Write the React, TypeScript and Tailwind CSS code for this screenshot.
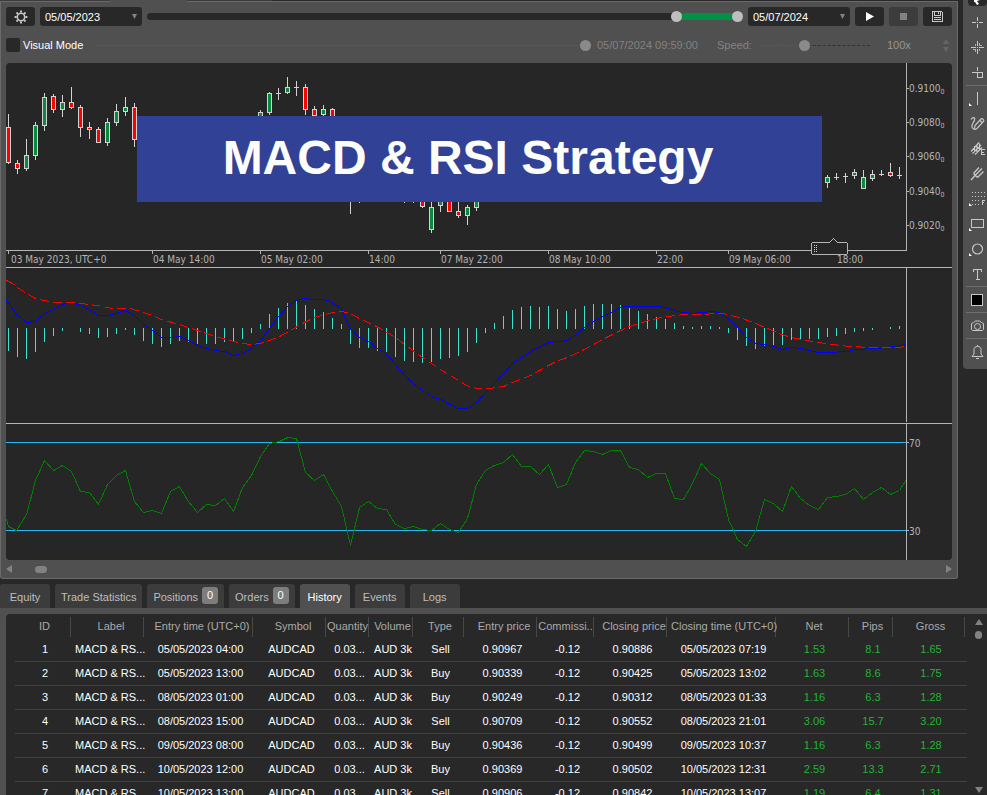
import React, { useState } from "react";

type Candle = [number, number, number, number, number, string];

// slot, high, body top, body bottom, low, kind (g = up, r = down, d = doji)
const candles: Candle[] = [
  [0, 114, 127, 163, 164, "r"],
  [1, 160, 163, 169, 174, "r"],
  [2, 139, 155, 169, 171, "g"],
  [3, 122, 125, 156, 160, "g"],
  [4, 93, 97, 126, 131, "g"],
  [5, 94, 96, 110, 113, "r"],
  [6, 95, 102, 110, 117, "g"],
  [7, 87, 102, 108, 109, "r"],
  [8, 105, 107, 128, 137, "r"],
  [9, 122, 127, 130, 139, "r"],
  [10, 127, 129, 143, 143, "r"],
  [11, 118, 122, 143, 146, "g"],
  [12, 104, 111, 123, 126, "g"],
  [13, 97, 107, 112, 116, "g"],
  [14, 103, 107, 140, 147, "r"],
  [28, 110, 112, 124, 126, "g"],
  [29, 92, 93, 113, 115, "g"],
  [30, 88, 93, 94, 100, "d"],
  [31, 77, 87, 93, 94, "g"],
  [32, 81, 87, 88, 96, "d"],
  [33, 84, 87, 110, 115, "r"],
  [34, 106, 109, 116, 118, "r"],
  [35, 105, 109, 115, 116, "g"],
  [36, 108, 109, 124, 126, "r"],
  [38, 180, 186, 192, 214, "g"],
  [39, 180, 186, 192, 203, "g"],
  [44, 180, 186, 192, 203, "r"],
  [45, 180, 186, 192, 203, "g"],
  [46, 190, 195, 207, 208, "r"],
  [47, 190, 207, 230, 233, "g"],
  [48, 190, 195, 206, 212, "g"],
  [49, 190, 195, 212, 212, "r"],
  [50, 190, 211, 216, 218, "r"],
  [51, 205, 207, 216, 225, "g"],
  [52, 190, 195, 208, 211, "g"],
  [91, 175, 177, 183, 188, "g"],
  [92, 173, 177, 178, 180, "d"],
  [93, 173, 176, 177, 183, "d"],
  [94, 169, 172, 176, 179, "g"],
  [95, 170, 177, 189, 189, "g"],
  [96, 170, 174, 179, 181, "g"],
  [97, 170, 174, 175, 176, "d"],
  [98, 163, 172, 176, 177, "r"],
  [99, 167, 175, 176, 179, "d"],
];

const histogram = [
  -23, -29, -31, -24, -14, -8, -3, 0, -4, -6, -10, -9, -6, -2, -7, -13, -16, -19, -16, -13,
  -14, -16, -16, -16, -14, -14, -11, -5, 5, 15, 21, 26, 28, 24, 20, 17, 11, 5, -16, -20,
  -20, -23, -24, -29, -33, -34, -35, -34, -31, -30, -28, -24, -15, -5, 6, 13, 19, 22, 23, 22,
  23, 20, 18, 20, 23, 25, 25, 25, 24, 21, 18, 15, 12, 10, 6, 3, 2, 3, 3, 2,
  -5, -12, -18, -21, -18, -17, -17, -12, -11, -11, -11, -9, -8, -6, -4, -3, -2, 0, 2, 3,
];

const macdLine =
  "6,300 10,305 17,315 26,322 35,321 44,313 53,309 62,304 70,302 80,305 89,309 98,315 107,315 116,313 125,310 134,315 143,324 152,330 161,337 170,337 179,336 188,340 197,345 206,348 215,350 224,351 233,355 242,353 251,348 260,340 269,328 278,316 287,306 296,300 302,298 314,299 323,299 330,301 341,308 350,329 359,337 368,341 377,348 386,354 395,364 404,375 413,383 422,390 431,396 440,399 449,404 458,408 467,408 476,402 485,392 494,383 503,373 512,363 530,351 548,342 567,340 576,334 585,326 593,321 602,316 611,312 620,307 626,306 659,306 668,308 677,311 692,313 711,311 719,312 728,318 737,327 746,337 755,343 764,344 773,346 782,349 792,347 801,348 817,352 827,352 848,351 854,349 876,348 886,347 899,345 906,344";

const signalLine =
  "6,280 12,283 17,287 26,293 35,298 53,302 75,302 88,304 97,305 112,308 130,308 143,312 152,315 161,319 179,324 197,330 215,336 233,341 242,343 251,344 260,343 269,340 279,336 290,330 302,323 314,317 328,313 337,311 341,311 350,313 359,318 370,323 380,328 395,337 404,344 422,357 440,369 458,380 466,385 476,388 489,388 503,386 512,382 530,375 548,365 556,361 569,356 584,349 602,339 620,330 629,326 645,321 660,317 684,314 704,314 713,313 722,313 731,315 742,318 755,323 767,328 781,334 791,337 807,340 818,342 832,344 848,346 872,347 898,347 906,346";

const rsiLine =
  "6,519 8,526 16,530 26,514 35,480 44,460 53,470 62,465 71,471 80,491 89,492 98,504 107,484 116,475 125,470 134,501 143,512 152,510 161,513 170,491 179,486 188,501 197,512 206,504 215,505 224,498 233,511 242,487 251,475 260,456 269,443 279,441 287,437 296,438 305,472 314,480 323,474 332,491 341,506 350,545 359,507 368,501 377,508 386,509 395,524 404,528 413,526 422,529 431,530 440,523 449,529 458,532 467,518 476,484 485,470 494,465 503,462 512,454 521,466 530,466 539,474 548,464 557,487 566,484 575,462 584,450 593,451 602,454 611,450 620,450 629,467 638,469 647,477 656,473 665,473 674,498 683,499 692,483 701,463 710,473 719,479 728,519 737,539 746,546 755,531 764,499 773,503 782,511 791,486 800,498 809,505 818,509 827,497 836,496 845,494 854,488 863,499 872,492 881,487 890,494 899,490 906,479";

const timeLabels: [number, string][] = [
  [8, "03 May 2023, UTC+0"],
  [152, "04 May 14:00"],
  [260, "05 May 02:00"],
  [368, "14:00"],
  [440, "07 May 22:00"],
  [548, "08 May 10:00"],
  [656, "22:00"],
  [728, "09 May 06:00"],
  [836, "18:00"],
];

const priceLabels: [number, string][] = [
  [88, "0.9100"],
  [122, "0.9080"],
  [156, "0.9060"],
  [191, "0.9040"],
  [225, "0.9020"],
];

const tabs = [
  { name: "Equity" },
  { name: "Trade Statistics" },
  { name: "Positions", count: 0 },
  { name: "Orders", count: 0 },
  { name: "History" },
  { name: "Events" },
  { name: "Logs" },
];

// name, width, header padding
const columns: [string, number, string][] = [
  ["ID", 56, "pl-1"],
  ["Label", 73, "pl-2"],
  ["Entry time (UTC+0)", 109, "pl-2"],
  ["Symbol", 73, "pl-2"],
  ["Quantity", 43, "pl-px"],
  ["Volume", 44, "pl-1"],
  ["Type", 51, "pl-1"],
  ["Entry price", 73, "pl-2"],
  ["Commissi..", 57, "pl-px"],
  ["Closing price", 73, "pl-2"],
  ["Closing time (UTC+0)", 109, "pl-1"],
  ["Net", 73, "pl-1"],
  ["Pips", 44, "pl-1"],
  ["Gross", 72, "pl-1"],
];

// entry time, type, entry price, closing price, closing time, net, pips, gross
const trades = [
  ["05/05/2023 04:00", "Sell", "0.90967", "0.90886", "05/05/2023 07:19", "1.53", "8.1", "1.65"],
  ["05/05/2023 13:00", "Buy", "0.90339", "0.90425", "05/05/2023 13:02", "1.63", "8.6", "1.75"],
  ["08/05/2023 01:00", "Buy", "0.90249", "0.90312", "08/05/2023 01:33", "1.16", "6.3", "1.28"],
  ["08/05/2023 15:00", "Sell", "0.90709", "0.90552", "08/05/2023 21:01", "3.06", "15.7", "3.20"],
  ["09/05/2023 08:00", "Buy", "0.90436", "0.90499", "09/05/2023 10:37", "1.16", "6.3", "1.28"],
  ["10/05/2023 12:00", "Buy", "0.90369", "0.90502", "10/05/2023 12:31", "2.59", "13.3", "2.71"],
  ["10/05/2023 13:00", "Sell", "0.90906", "0.90842", "10/05/2023 13:07", "1.19", "6.4", "1.31"],
];

const rangeBase =
  "absolute inset-0 m-0 h-full w-full appearance-none bg-transparent pointer-events-none [&::-webkit-slider-thumb]:pointer-events-auto [&::-webkit-slider-thumb]:size-[11px] [&::-webkit-slider-thumb]:appearance-none [&::-webkit-slider-thumb]:rounded-full";
const brightThumb = "[&::-webkit-slider-thumb]:bg-[#bebebe]";
const dimThumb = "[&::-webkit-slider-thumb]:bg-[#8a8a8a]";
const iconButton = "flex h-[19px] w-[29px] shrink-0 items-center justify-center rounded-[3px] bg-[#282828]";

function DateSelect({ label, value }: { label: string; value: string }) {
  return (
    <div className="relative h-[19px] w-[102px] shrink-0">
      <select
        aria-label={label}
        defaultValue={value}
        className="block h-full w-full appearance-none rounded-[3px] bg-[#282828] pl-[5px] text-white"
      >
        <option>{value}</option>
      </select>
      <svg className="pointer-events-none absolute right-[5px] top-[7px]" width="5" height="5">
        <path d="M0 0H5L2.5 5Z" fill="#828282" />
      </svg>
    </div>
  );
}

function ControlRow() {
  return (
    <div className="flex gap-[5px]">
      <button aria-label="Settings" className={iconButton}>
        <svg width="14" height="14" viewBox="0 0 14 14" fill="none" stroke="#c8c8c8">
          <circle cx="7" cy="7" r="3.7" strokeWidth="1.6" />
          <path
            strokeWidth="1.9"
            d="M7 .6v2M7 11.4v2M.6 7h2M11.4 7h2M2.5 2.5l1.3 1.3M10.2 10.2l1.3 1.3M2.5 11.5l1.3-1.3M10.2 3.8l1.3-1.3"
          />
        </svg>
      </button>
      <DateSelect label="Start date" value="05/05/2023" />
      <div className="relative h-[19px] flex-1">
        <div className="absolute inset-x-0 top-[6px] h-[7px] rounded-full bg-[#282828]" />
        <div className="absolute right-[6px] top-[6px] h-[7px] w-[10.3%] bg-[#009244]" />
        <input type="range" aria-label="Range start" max="1000" defaultValue="896" className={`${rangeBase} ${brightThumb}`} />
        <input type="range" aria-label="Range end" max="1000" defaultValue="1000" className={`${rangeBase} ${brightThumb}`} />
      </div>
      <DateSelect label="End date" value="05/07/2024" />
      <button aria-label="Start" className={iconButton}>
        <svg width="8" height="9">
          <path d="M0 0L8 4.5L0 9Z" fill="#fff" />
        </svg>
      </button>
      <button aria-label="Stop" disabled className="flex h-[19px] w-[29px] shrink-0 items-center justify-center rounded-[3px] bg-[#3c3c3c]">
        <span className="size-[7px] bg-[#828282]" />
      </button>
      <button aria-label="Save report" className={iconButton}>
        <svg width="11" height="11" fill="none" stroke="#c8c8c8" shapeRendering="crispEdges">
          <path d="M.5 .5H9.5L10.5 1.5V10.5H.5ZM2.5 1V4.5H8.5V1M6.5 1V3M2 6.5H9M2 8.5H9" />
        </svg>
      </button>
    </div>
  );
}

function VisualRow() {
  const [visual, setVisual] = useState(false);

  return (
    <div className="mt-3 flex h-[14px] items-center text-[#828282]">
      <input
        id="visual"
        type="checkbox"
        checked={visual}
        onChange={(e) => setVisual(e.target.checked)}
        className="size-[14px] shrink-0 appearance-none rounded-[2px] bg-[#282828] checked:bg-[#009244]"
      />
      <label htmlFor="visual" className="w-[77px] shrink-0 pl-[3px] text-white">
        Visual Mode
      </label>
      <div className="relative h-[14px] flex-1">
        <div className="absolute inset-x-0 top-[7px] h-px bg-[#1c7a46]" />
        <input type="range" aria-label="Progress" disabled max="100" defaultValue="100" className={`${rangeBase} ${dimThumb}`} />
      </div>
      <span className="ml-[6px] w-[120px] shrink-0 whitespace-nowrap">05/07/2024 09:59:00</span>
      <label htmlFor="speed" className="w-[45px] shrink-0">
        Speed:
      </label>
      <div className="relative h-[14px] w-[108px] shrink-0">
        <div className="absolute left-0 top-[7px] w-[38%] border-t border-dashed border-[#1c7a46]" />
        <div className="absolute right-0 top-[7px] w-[62%] border-t border-dashed border-[#333333]" />
        <input id="speed" type="range" disabled max="100" defaultValue="38" className={`${rangeBase} ${dimThumb}`} />
      </div>
      <input aria-label="Speed factor" readOnly value="100x" className="ml-[17px] w-[56px] shrink-0 bg-transparent text-[#969696]" />
      <svg width="6" height="14" className="mr-[3px] shrink-0">
        <path d="M3 1L6 6H0ZM3 14L6 9H0Z" fill="#666666" />
      </svg>
    </div>
  );
}

function Plot() {
  return (
    <svg className="h-[497px] min-w-0 flex-1" fontFamily="'DejaVu Sans Condensed', 'DejaVu Sans', sans-serif" fontSize="10">
      <g transform="translate(-6 -63)" shapeRendering="crispEdges">
        {candles.map(([slot, high, top, bottom, low, kind]) => {
          const x = 8 + slot * 9;
          return (
            <g key={slot}>
              <rect x={x} y={high} width="1" height={low - high} fill="#d2d2d2" />
              <rect x={x - 2} y={top} width="5" height={bottom - top} fill="#d2d2d2" />
              {kind !== "d" && (
                <rect x={x - 1} y={top + 1} width="3" height={Math.max(bottom - top - 2, 1)} fill={kind === "g" ? "#0a8a3c" : "#ff0000"} />
              )}
            </g>
          );
        })}

        {/* pane borders and time axis */}
        <g fill="#b4b4b4">
          <rect x="6" y="250" width="100%" height="1" />
          <rect x="6" y="267" width="100%" height="1" />
          <rect x="6" y="423" width="100%" height="1" />
          {timeLabels.map(([x, label]) => (
            <g key={x}>
              <rect x={x} y="251" width="1" height="3" />
              <text x={x === 8 ? 11 : x + 1} y="263">
                {label}
              </text>
            </g>
          ))}
        </g>
        <path d="M812.5 242.5H829.5L833.5 238.5L837.5 242.5H846.5L847.5 243.5V253.5L846.5 254.5H812.5L811.5 253.5V243.5Z" fill="#262626" stroke="#b4b4b4" />
        <path d="M814 245.5h1M816 245.5h1M814 247.5h1M816 247.5h1M814 249.5h1M816 249.5h1M814 251.5h1M816 251.5h1" stroke="#d2d2d2" />

        {/* MACD pane */}
        {histogram.map((h, i) => (
          <rect key={i} x={8 + i * 9} y={h > 0 ? 329 - h : 328} width="1" height={Math.abs(h)} fill="#40e0d0" />
        ))}
        <g transform="translate(.5 .5)" fill="none">
          <polyline points={macdLine} stroke="#0000ff" />
          <polyline points={signalLine} stroke="#ff0000" strokeDasharray="9 4" />
        </g>

        {/* RSI pane */}
        <rect x="6" y="442" width="100%" height="1" fill="#28b9f0" />
        <rect x="6" y="530" width="100%" height="1" fill="#28b9f0" />
        <polyline points={rsiLine} transform="translate(.5 .5)" fill="none" stroke="#008000" />
      </g>
    </svg>
  );
}

function ValueAxis() {
  return (
    <svg className="h-[497px] w-[46px] shrink-0" fontFamily="'DejaVu Sans Condensed', 'DejaVu Sans', sans-serif" fontSize="10" fill="#b4b4b4">
      <g transform="translate(0 -63)" shapeRendering="crispEdges">
        <rect x="0" y="63" width="1" height="188" />
        <rect x="0" y="268" width="1" height="154" />
        <rect x="0" y="424" width="1" height="136" />
        <rect x="0" y="267" width="46" height="1" />
        <rect x="0" y="423" width="46" height="1" />
        {priceLabels.map(([y, price]) => (
          <g key={y}>
            <rect x="1" y={y} width="2" height="1" />
            <text x="3" y={y + 4}>
              {price}
              <tspan fontSize="7" dy="2">
                0
              </tspan>
            </text>
          </g>
        ))}
        <rect x="1" y="442" width="2" height="1" />
        <text x="3" y="447">
          70
        </text>
        <rect x="1" y="530" width="2" height="1" />
        <text x="3" y="535">
          30
        </text>
      </g>
    </svg>
  );
}

function ChartPanel() {
  return (
    <div className="relative mt-[11px] flex overflow-hidden rounded-[4px] bg-[#262626]">
      <Plot />
      <ValueAxis />
      <div className="absolute left-[131px] right-[130px] top-[53px] flex h-[86px] items-center justify-center bg-[#304196] pb-[3px] pr-[23px]">
        <h1 className="whitespace-nowrap text-[48px] font-bold leading-[56px] text-[#fcfcf8]">MACD &amp; RSI Strategy</h1>
      </div>
    </div>
  );
}

function ToolButton({ label, children }: { label: string; children: React.ReactNode }) {
  return (
    <button aria-label={label} className="block h-[25px] w-full shrink-0">
      <svg width="24" height="25" fill="none" stroke="#c8c8c8">
        {children}
      </svg>
    </button>
  );
}

const Corner = () => <path d="M6 17v3h3Z" fill="#fff" stroke="none" />;
const Rule = () => <div className="ml-[3px] h-px shrink-0 bg-[#6e6e6e]" />;

function Toolbar() {
  return (
    <aside className="flex w-6 shrink-0 flex-col self-start overflow-hidden rounded-bl-[4px] bg-[#505050] pb-[5px]">
      <button aria-label="Pointer" className="ml-[5px] mb-1 block h-[6px] shrink-0 rounded-b-[4px] bg-[#282828]">
        <svg width="19" height="6">
          <path d="M6 0H12L9 1L11 4L9 5L7 2L6 2Z" fill="#fff" />
        </svg>
      </button>
      <ToolButton label="Crosshair">
        <path shapeRendering="crispEdges" d="M9 12.5h4M16 12.5h4M14.5 7v4M14.5 14v4M14 12.5h1" />
      </ToolButton>
      <ToolButton label="Sync crosshair">
        <path shapeRendering="crispEdges" d="M8 12.5h5M16 12.5h5M14.5 6v5M14.5 14v5M14 12.5h1" />
        <path shapeRendering="crispEdges" strokeOpacity=".8" d="M16.5 8v3M16 10.5h3M12.500 14v3M10 14.500h3M12.500 9v2M16.500 14v2" />
      </ToolButton>
      <ToolButton label="Measure">
        <path shapeRendering="crispEdges" d="M9 12.5h5M14.5 7v4M14.5 12.5h5v5h-5Z" />
      </ToolButton>
      <Rule />
      <ToolButton label="Vertical line">
        <path shapeRendering="crispEdges" d="M14.5 6v13" />
        <Corner />
      </ToolButton>
      <ToolButton label="Pencil">
        <path
          strokeWidth="1.2"
          d="M8 8.5C9.500 6 12.500 6 11.500 9C10.500 12 7.500 14.500 9.500 17C10.500 18.500 12.500 18.500 14 17.500L20.500 10.500C21.500 9 19.500 7 18 8L12 14.500L11.500 17.500M17 9.500L19 11.500"
        />
      </ToolButton>
      <ToolButton label="Equidistant channel">
        <path strokeWidth="1.2" d="M8 15.500L16 6.500M9.500 17.500L18 9M12 18.500L19 11.500M11.500 10V16M14 8.500V17M16.500 7.500V14" />
        <path d="M21.500 13.500H18.500V18.500H21.500M18.500 16H21" shapeRendering="crispEdges" />
      </ToolButton>
      <ToolButton label="Pitchfork">
        <path strokeWidth="1.3" d="M8 19L12.500 14M10.500 12.500L16 6.500M12.500 14L19 7.500M14.500 16.500L20.500 10.500M10.500 12.500L14.500 16.500" />
      </ToolButton>
      <ToolButton label="Fibonacci">
        <path shapeRendering="crispEdges" strokeDasharray="1 2" d="M9 6.500h13M9 10.500h13M9 14.500h8M9 18.500h8" />
        <path shapeRendering="crispEdges" d="M22 14.500H19.500V19M19.500 16.500H21" />
        <Corner />
      </ToolButton>
      <ToolButton label="Rectangle">
        <path shapeRendering="crispEdges" d="M8.500 8.500H20.500V16.500H8.500Z" />
        <Corner />
      </ToolButton>
      <ToolButton label="Ellipse">
        <circle cx="14.500" cy="13" r="5" strokeWidth="1.2" />
        <Corner />
      </ToolButton>
      <ToolButton label="Text">
        <path shapeRendering="crispEdges" d="M10.500 11V8.500H18.500V11M14.500 8.500V18.500M12.500 18.500H17" />
      </ToolButton>
      <Rule />
      <ToolButton label="Colour">
        <path shapeRendering="crispEdges" d="M8.500 7.500H19.500V18.500H8.500Z" fill="#000" />
      </ToolButton>
      <Rule />
      <ToolButton label="Snapshot">
        <path d="M8.500 10.500L10.500 9.500L12.500 8H16.500L18.500 9.500L20.500 10.500V16.500L19.500 17.500H9.500L8.500 16.500Z" />
        <circle cx="14.500" cy="13.500" r="3" />
      </ToolButton>
      <Rule />
      <ToolButton label="Alerts">
        <path d="M9 17.500L11 15V10.500C11 8.500 12.500 7.500 14.500 7.500S18 8.500 18 10.500V15L20 17.500ZM14.500 7.500V6M13 19.500H16" />
      </ToolButton>
    </aside>
  );
}

function HistoryTable() {
  return (
    <table className="w-full table-fixed border-collapse text-center">
      <colgroup>
        {columns.map(([name, width]) => (
          <col key={name} style={{ width }} />
        ))}
        <col className="w-[2px]" />
      </colgroup>
      <thead>
        <tr className="h-[23px] text-[#aaaaaa]">
          {columns.map(([name, , pad]) => (
            <th key={name} scope="col" className="p-0 align-bottom font-normal">
              <div className={`h-5 whitespace-nowrap border-r border-[#484848] leading-[18px] ${pad}`}>{name}</div>
            </th>
          ))}
          <td />
        </tr>
      </thead>
      <tbody>
        {trades.map(([entry, type, open, close, closed, net, pips, gross], i) => (
          <tr key={i} className="h-6 whitespace-nowrap border-b border-[#424242] text-white [&>td]:p-0 [&>td]:pl-1">
            <td>{i + 1}</td>
            <td>MACD &amp; RS...</td>
            <td>{entry}</td>
            <td>AUDCAD</td>
            <td>0.03...</td>
            <td>AUD 3k</td>
            <td>{type}</td>
            <td>{open}</td>
            <td>-0.12</td>
            <td>{close}</td>
            <td>{closed}</td>
            <td className="text-[#22b432]">{net}</td>
            <td className="text-[#22b432]">{pips}</td>
            <td className="text-[#22b432]">{gross}</td>
            <td />
          </tr>
        ))}
      </tbody>
    </table>
  );
}

export default function App() {
  const [active, setActive] = useState("History");

  return (
    <div className="flex h-screen flex-col overflow-hidden bg-[#282828] font-['Liberation_Sans',Arial,sans-serif] text-[11px] leading-[14px]">
      <div className="flex shrink-0 gap-[5px]">
        <main className="min-w-0 flex-1">
          <div className="flex h-[2px]">
            <div className="w-[110px] border-b border-[#6a6a6a] bg-[#3c3c3c]" />
            <div className="w-[77px] bg-[#505050]" />
            <div className="w-[85px] border-b border-[#6a6a6a] bg-[#3c3c3c]" />
            <div className="flex-1 border-b border-[#6a6a6a]" />
          </div>
          <div className="rounded-b-[3px] border-x border-b border-[#6a6a6a] bg-[#505050] px-[5px] pt-[5px]">
            <ControlRow />
            <VisualRow />
            <ChartPanel />
            <div className="flex h-[18px] items-center">
              <svg width="6" height="8">
                <path d="M6 0V8L0 4Z" fill="#828282" />
              </svg>
              <div className="ml-[23px] h-[7px] w-3 rounded-full bg-[#828282]" />
              <svg width="6" height="8" className="ml-auto">
                <path d="M0 0V8L6 4Z" fill="#828282" />
              </svg>
            </div>
          </div>
        </main>
        <Toolbar />
      </div>

      <div role="tablist" className="mt-[5px] flex h-6 shrink-0 gap-[5px]">
        {tabs.map((tab) => (
          <button
            key={tab.name}
            role="tab"
            aria-selected={active === tab.name}
            onClick={() => setActive(tab.name)}
            className={`flex min-w-[50px] items-center justify-center gap-1 rounded-t-[3px] px-[6px] pt-[2px] ${
              active === tab.name ? "bg-[#505050] text-white" : "bg-[#3c3c3c] text-[#bebebe]"
            }`}
          >
            {tab.name}
            {tab.count !== undefined && (
              <span className="mb-1 flex h-[17px] w-4 items-center justify-center rounded-[3px] bg-[#7d7d7d] text-white">{tab.count}</span>
            )}
          </button>
        ))}
      </div>

      <section className="flex min-h-0 flex-1 bg-[#505050] pl-[6px] pt-[6px]">
        <div className="flex min-w-0 flex-1 overflow-hidden rounded-tl-[4px] bg-[#282828] pl-[9px]">
          <div className="min-w-0 flex-1">
            <HistoryTable />
          </div>
          <div className="flex w-5 shrink-0 flex-col items-center pb-[2px] pl-[3px] pt-[5px]">
            <svg width="8" height="6">
              <path d="M4 0L8 6H0Z" fill="#828282" />
            </svg>
            <div className="mt-[6px] h-2 w-[7px] rounded-full bg-[#828282]" />
            <svg width="8" height="6" className="mt-auto">
              <path d="M0 0H8L4 6Z" fill="#828282" />
            </svg>
          </div>
        </div>
      </section>
    </div>
  );
}
